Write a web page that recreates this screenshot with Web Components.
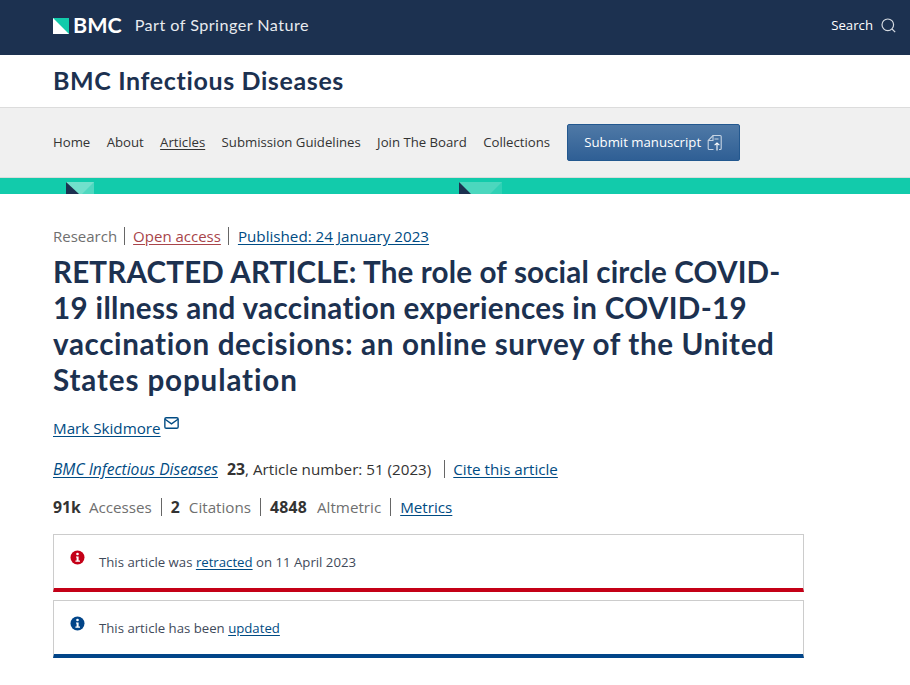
<!DOCTYPE html>
<html lang="en">
<head>
<meta charset="utf-8">
<title>BMC Infectious Diseases</title>
<style>
    html, body { margin: 0; padding: 0; background: #fff; }
    body { font-family: "Open Sans", "Liberation Sans", sans-serif; color: #333; overflow: hidden; height: 685px; }
</style>
</head>
<body>
<bmc-header></bmc-header>
<bmc-journal-title>BMC Infectious Diseases</bmc-journal-title>
<bmc-nav></bmc-nav>
<bmc-ribbon></bmc-ribbon>
<bmc-article></bmc-article>

<script>
class BmcHeader extends HTMLElement {
    constructor() {
        super();
        this.attachShadow({ mode: 'open' });
        this.shadowRoot.innerHTML = `
            <style>
                :host { display: flex; align-items: center; justify-content: space-between; box-sizing: border-box; height: 55px; padding: 0 14px 4px 53px; background: #1c3150; color: #fff; font-variant-ligatures: none; }
                .brand { display: flex; align-items: center; }
                .brand svg { display: block; }
                .bmc { font: 700 21.5px/1 Lato, sans-serif; margin-left: 4px; }
                .part { font: 400 16.2px/1 Lato, sans-serif; margin-left: 13px; color: #e8ebef; letter-spacing: .45px; }
                .search { display: flex; align-items: center; gap: 8px; font: 400 13.2px/1 "Open Sans", sans-serif; }
            </style>
            <div class="brand">
                <svg width="16" height="16" viewBox="0 0 16 16"><rect width="16" height="16" fill="#fff"/><path d="M0 0H16V16Z" fill="#12cbab"/></svg>
                <span class="bmc">BMC</span>
                <span class="part">Part of Springer Nature</span>
            </div>
            <div class="search">
                <span>Search</span>
                <svg width="15" height="15" viewBox="0 0 15 15" fill="none" stroke="#d5dae1" stroke-width="1.2"><circle cx="6.8" cy="6.8" r="5.8"/><path d="M11 11l3.2 3.2"/></svg>
            </div>`;
    }
}

class BmcJournalTitle extends HTMLElement {
    constructor() {
        super();
        this.attachShadow({ mode: 'open' });
        this.shadowRoot.innerHTML = `
            <style>
                :host { display: flex; align-items: center; box-sizing: border-box; height: 53px; padding: 0 0 2px 53px; background: #fff; color: #1c3150; font: 700 25px/1 Lato, sans-serif; font-variant-ligatures: none; letter-spacing: .63px; border-bottom: 1px solid #dcdcdc; }
            </style>
            <slot></slot>`;
    }
}

class BmcNav extends HTMLElement {
    constructor() {
        super();
        this.attachShadow({ mode: 'open' });
        this.shadowRoot.innerHTML = `
            <style>
                :host { display: flex; align-items: center; box-sizing: border-box; height: 70px; padding: 0 0 0 53px; background: #f0f0f0; border-bottom: 1px solid #dcdcdc; font: 400 13.2px/1 "Open Sans", sans-serif; color: #333; }
                a { color: inherit; text-decoration: none; margin-right: 16.35px; }
                a.on { text-decoration: underline; text-underline-offset: 2px; }
                .btn { display: flex; align-items: center; box-sizing: border-box; height: 37px; width: 173px; margin-left: .75px; padding-left: 16px; border: 1px solid #23588f; border-radius: 2px; background: linear-gradient(#4f79a6, #2f5f95); color: #fff; }
                .btn svg { margin-left: 6px; }
            </style>
            <a>Home</a><a>About</a><a class="on">Articles</a><a>Submission Guidelines</a><a>Join The Board</a><a>Collections</a>
            <div class="btn">Submit manuscript
                <svg width="16" height="18" viewBox="0 0 16 18" fill="none" stroke="#c6d3e2" stroke-width="1.1"><path d="M6.5 15.5H2.2a1 1 0 0 1-1-1V6.5L6 1.5h7.2a1 1 0 0 1 1 1v12a1 1 0 0 1-1 1H12"/><path d="M6 1.5V6.5H1.2M7.5 5h4"/><path d="M10 16.5V9M7.6 11.2 10 9l2.4 2.2" stroke="#fff"/></svg>
            </div>`;
    }
}

class BmcRibbon extends HTMLElement {
    constructor() {
        super();
        this.attachShadow({ mode: 'open' });
        this.shadowRoot.innerHTML = `
            <style>
                :host { display: block; height: 16px; background: #12cbab; }
                svg { display: block; }
            </style>
            <svg width="910" height="16" viewBox="0 0 910 16">
                <g transform="translate(66 4)"><path d="M0 0H28V12H0Z" fill="#72e0cc"/><path d="M28 0V12H16Z" fill="#4fd8c0"/><path d="M0 0L13 12H0Z" fill="#1c3150"/></g>
                <g transform="translate(459 4)"><path d="M0 0H43V12H0Z" fill="#4bd7be"/><path d="M43 0V12H31Z" fill="#2fd1b5"/><path d="M0 0L12 12H0Z" fill="#1c3150"/></g>
            </svg>`;
    }
}

class BmcNotice extends HTMLElement {
    constructor() {
        super();
        this.attachShadow({ mode: 'open' });
        const color = this.getAttribute('color');
        this.shadowRoot.innerHTML = `
            <style>
                :host { display: flex; box-sizing: border-box; height: 58px; padding: 15px 0 0 16px; border: 1px solid #ccc; border-bottom: 4px solid ${color}; font: 400 13.2px/1 "Open Sans", sans-serif; color: #3f4a5a; }
                svg { flex: none; display: block; }
                span { margin: 6px 0 0 14px; }
            </style>
            <svg width="15" height="15" viewBox="0 0 15 15"><circle cx="7.5" cy="7.5" r="7" fill="${color}"/><circle cx="7.5" cy="4" r="1.3" fill="#fff"/><path d="M6 6.4h2.6v4.2H10v1.2H5.4v-1.2h1.2V7.6H6Z" fill="#fff"/></svg>
            <span><slot></slot></span>`;
    }
}

class BmcArticle extends HTMLElement {
    constructor() {
        super();
        this.attachShadow({ mode: 'open' });
        this.shadowRoot.innerHTML = `
            <style>
                :host { display: block; box-sizing: border-box; width: 804px; padding: 32px 0 0 53px; font: 400 15.2px/1.2 "Open Sans", sans-serif; color: #333; }
                a { color: #004b83; text-decoration: underline; text-underline-offset: 2px; }
                .meta, .cite, .stats { display: flex; align-items: center; }
                .meta > * + * { margin-left: 7px; border-left: 1px solid #666; }
                .stats > * + * { margin-left: 9px; padding-left: 9px; border-left: 1px solid #666; }
                .meta { height: 20px; }
                .meta .type { color: #6f6f6f; font-size: 15px; }
                .meta .oa { color: #a8444a; font-size: 15px; padding-left: 8px; }
                .meta .pub { padding-left: 9px; }
                h1 { margin: 8px 0 0; font: 700 29.6px/36px Lato, sans-serif; font-variant-ligatures: none; color: #1c3150; }
                h1 span { display: block; white-space: nowrap; }
                .author { margin-top: 19px; height: 22px; display: flex; align-items: center; }
                .author svg { margin: -10px 0 0 3px; }
                .cite { margin-top: 20px; height: 20px; }
                .cite em { font-size: 15.6px; }
                .cite b { margin-left: 9px; font-size: 15.8px; }
                .cite .sep { margin-left: 13px; padding-left: 8px; border-left: 1px solid #666; }
                .stats { margin-top: 18px; height: 20px; }
                .stats b { margin-right: 9px; font-size: 15.8px; }
                .stats span:first-child b { margin-right: 8px; }
                .stats span:nth-child(3) b { margin-right: 10px; letter-spacing: .2px; }
                .stats i { font-style: normal; color: #6f6f6f; }
                bmc-notice { display: flex; margin-top: 8px; }
                .notices { margin-top: 17px; }
            </style>
            <div class="meta"><span class="type">Research</span><a class="oa">Open access</a><a class="pub">Published: 24 January 2023</a></div>
            <h1><span style="letter-spacing:.15px">RETRACTED ARTICLE: The role of social circle COVID-</span><span style="letter-spacing:.34px">19 illness and vaccination experiences in COVID-19</span><span style="letter-spacing:.64px">vaccination decisions: an online survey of the United</span><span style="letter-spacing:.87px">States population</span></h1>
            <div class="author"><a>Mark Skidmore</a><svg width="15" height="12" viewBox="0 0 16 13" fill="none" stroke="#004b83" stroke-width="1.5"><rect x=".8" y=".8" width="14.4" height="11.4" rx="1.5"/><path d="M1 2.5l7 5 7-5"/></svg></div>
            <div class="cite"><a><em>BMC Infectious Diseases</em></a><b>23</b><span>, Article number: 51 (2023)</span><span class="sep"><a>Cite this article</a></span></div>
            <div class="stats"><span><b>91k</b><i>Accesses</i></span><span><b>2</b><i>Citations</i></span><span><b>4848</b><i>Altmetric</i></span><a>Metrics</a></div>
            <div class="notices">
                <bmc-notice color="#c40017">This article was <a>retracted</a> on 11 April 2023</bmc-notice>
                <bmc-notice color="#024589">This article has been <a>updated</a></bmc-notice>
            </div>`;
    }
}

customElements.define('bmc-header', BmcHeader);
customElements.define('bmc-journal-title', BmcJournalTitle);
customElements.define('bmc-nav', BmcNav);
customElements.define('bmc-ribbon', BmcRibbon);
customElements.define('bmc-notice', BmcNotice);
customElements.define('bmc-article', BmcArticle);
</script>
</body>
</html>
